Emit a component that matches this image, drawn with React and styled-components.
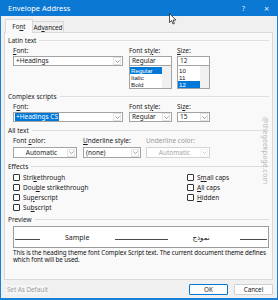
import React from "react";
import styled, { createGlobalStyle } from "styled-components";

const GlobalStyle = createGlobalStyle`
  html, body {
    margin: 0;
    padding: 0;
  }
  body {
    width: 278px;
    height: 300px;
    overflow: hidden;
    background: #f0f0f0;
    font-family: "Noto Sans", "DejaVu Sans", sans-serif;
    color: #1b1b1b;
  }
`;

function Chevron() {
  return (
    <svg width="5" height="3" viewBox="0 0 5 3">
      <path d="M0.4 0.4 L2.5 2.5 L4.6 0.4" fill="none" stroke="#606060" strokeWidth="0.6" />
    </svg>
  );
}

function Cursor() {
  return (
    <svg width="8" height="12" viewBox="0 0 8 12">
      <path
        d="M0.5 0.5 L0.5 9.5 L2.6 7.6 L4 11 L5.4 10.4 L4 7.1 L6.9 7.1 Z"
        fill="#fff"
        stroke="#222"
        strokeWidth="0.8"
        strokeLinejoin="round"
      />
    </svg>
  );
}

function App() {
  return (
    <Window>
      <GlobalStyle />
      <TitleBar>
        <Title>Envelope Address</Title>
        <TitleButton>?</TitleButton>
        <TitleButton $close>×</TitleButton>
      </TitleBar>

      <Body>
        <TabBar>
          <Tab $active>
            Fo<U>n</U>t
          </Tab>
          <Tab>
            Ad<U>v</U>anced
          </Tab>
        </TabBar>

        <Panel>
          <GroupHeader>Latin text</GroupHeader>
          <FieldRow $top={2}>
            <Field $w={110}>
              <FieldLabel>
                <U>F</U>ont:
              </FieldLabel>
              <Combo>
                <ComboText>+Headings</ComboText>
                <ArrowBox>
                  <Chevron />
                </ArrowBox>
              </Combo>
            </Field>
            <Field $w={43} $gap={6}>
              <FieldLabel>
                Font st<U>y</U>le:
              </FieldLabel>
              <Combo>
                <ComboText>Regular</ComboText>
              </Combo>
              <List>
                <Items>
                  <Item $selected>Regular</Item>
                  <Item>Italic</Item>
                  <Item>Bold</Item>
                </Items>
                <ScrollTrack />
              </List>
            </Field>
            <Field $w={33} $gap={5}>
              <FieldLabel>
                <U>S</U>ize:
              </FieldLabel>
              <Combo>
                <ComboText>12</ComboText>
              </Combo>
              <List>
                <Items>
                  <Item>10</Item>
                  <Item>11</Item>
                  <Item $selected>12</Item>
                </Items>
                <ScrollTrack />
              </List>
            </Field>
          </FieldRow>

          <GroupHeader $top={3}>Complex scripts</GroupHeader>
          <FieldRow $top={2}>
            <Field $w={110}>
              <FieldLabel>
                F<U>o</U>nt:
              </FieldLabel>
              <Combo>
                <ComboText>
                  <Selection>+Headings CS</Selection>
                </ComboText>
                <ArrowBox>
                  <Chevron />
                </ArrowBox>
              </Combo>
            </Field>
            <Field $w={43} $gap={6}>
              <FieldLabel>
                Font st<U>y</U>le:
              </FieldLabel>
              <Combo>
                <ComboText>Regular</ComboText>
                <ArrowBox>
                  <Chevron />
                </ArrowBox>
              </Combo>
            </Field>
            <Field $w={33} $gap={5}>
              <FieldLabel>
                Si<U>z</U>e:
              </FieldLabel>
              <Combo>
                <ComboText>15</ComboText>
                <ArrowBox>
                  <Chevron />
                </ArrowBox>
              </Combo>
            </Field>
          </FieldRow>

          <GroupHeader $top={4}>All text</GroupHeader>
          <FieldRow $top={2}>
            <Field $w={64}>
              <FieldLabel>
                Font <U>c</U>olor:
              </FieldLabel>
              <Combo $tall>
                <ComboText $center>Automatic</ComboText>
                <ArrowBox>
                  <Chevron />
                </ArrowBox>
              </Combo>
            </Field>
            <Field $w={58} $gap={6}>
              <FieldLabel>
                <U>U</U>nderline style:
              </FieldLabel>
              <Combo $tall>
                <ComboText>(none)</ComboText>
                <ArrowBox>
                  <Chevron />
                </ArrowBox>
              </Combo>
            </Field>
            <Field $w={64} $gap={5}>
              <FieldLabel $disabled>Underline color:</FieldLabel>
              <Combo $tall $disabled>
                <ComboText $center $disabled>
                  Automatic
                </ComboText>
                <ArrowBox $disabled>
                  <Chevron />
                </ArrowBox>
              </Combo>
            </Field>
          </FieldRow>

          <GroupHeader $top={4}>Effects</GroupHeader>
          <Effects>
            <CheckColumn $w={174}>
              <CheckRow>
                <Box />
                Stri<U>k</U>ethrough
              </CheckRow>
              <CheckRow>
                <Box />
                Dou<U>b</U>le strikethrough
              </CheckRow>
              <CheckRow>
                <Box />
                Su<U>p</U>erscript
              </CheckRow>
              <CheckRow>
                <Box />
                Su<U>b</U>script
              </CheckRow>
            </CheckColumn>
            <CheckColumn>
              <CheckRow>
                <Box />
                S<U>m</U>all caps
              </CheckRow>
              <CheckRow>
                <Box />
                <U>A</U>ll caps
              </CheckRow>
              <CheckRow>
                <Box />
                <U>H</U>idden
              </CheckRow>
            </CheckColumn>
          </Effects>

          <GroupHeader $top={3}>Preview</GroupHeader>
          <PreviewBox>
            <Rule $w={25} $left={1} />
            <SampleText $left={25}>Sample</SampleText>
            <Rule $w={53} $left={26} />
            <SampleText $left={24} lang="ar">
              نموذج
            </SampleText>
            <Rule $w={27} $left={30} />
          </PreviewBox>
          <Description>
            This is the heading theme font Complex Script text. The current document theme defines
            which font will be used.
          </Description>
        </Panel>

        <Footer>
          <Button $w={45} $disabled>
            Set As Default
          </Button>
          <Spacer />
          <Button $w={39} $default>
            OK
          </Button>
          <Button $w={39} $left={6}>
            Cancel
          </Button>
        </Footer>
      </Body>

      <Watermark>@thegeekpage.com</Watermark>
      <CursorSpot>
        <Cursor />
      </CursorSpot>
    </Window>
  );
}

const Window = styled.div`
  position: relative;
  width: 278px;
  height: 300px;
  box-sizing: border-box;
  border: 1px solid #1a7fd6;
  border-top: none;
  border-bottom-width: 2px;
  display: flex;
  flex-direction: column;
  background: #f0f0f0;
  font-size: 6.5px;
`;

const TitleBar = styled.div`
  height: 16px;
  margin: 0 -1px;
  background: #0b78d4;
  color: #ffffff;
  display: flex;
  align-items: center;
  padding-left: 8px;
`;

const Title = styled.div`
  flex: 1;
  font-size: 7.4px;
  letter-spacing: 0.05px;
`;

const TitleButton = styled.div`
  width: 23px;
  text-align: center;
  font-size: ${(p) => (p.$close ? "9px" : "7px")};
  color: #dcebf9;
`;

const Body = styled.div`
  flex: 1;
  display: flex;
  flex-direction: column;
  padding: 3px 4px 0 3px;
`;

const TabBar = styled.div`
  display: flex;
  align-items: flex-end;
  height: 13px;
  padding-left: 1px;
`;

const Tab = styled.div`
  position: relative;
  z-index: 1;
  box-sizing: border-box;
  width: ${(p) => (p.$active ? "28px" : "32px")};
  height: ${(p) => (p.$active ? "14px" : "11px")};
  margin-bottom: ${(p) => (p.$active ? "-1px" : "0")};
  margin-left: ${(p) => (p.$active ? "0" : "-1px")};
  background: ${(p) => (p.$active ? "#f9f9f9" : "#f0f0f0")};
  border: 1px solid #d9d9d9;
  border-bottom: none;
  display: flex;
  align-items: center;
  justify-content: center;
  padding-bottom: ${(p) => (p.$active ? "1px" : "0")};
  font-size: 6.3px;
`;

const U = styled.span`
  text-decoration: underline;
  text-decoration-thickness: 0.5px;
  text-underline-offset: 1px;
`;

const Panel = styled.div`
  box-sizing: border-box;
  height: 248px;
  border: 1px solid #d9d9d9;
  background: #f9f9f9;
  padding: 3px 0 0 3px;
  display: flex;
  flex-direction: column;
`;

const GroupHeader = styled.div`
  display: flex;
  align-items: center;
  height: 9px;
  margin-top: ${(p) => p.$top || 0}px;
  color: #1b1b1b;

  &::after {
    content: "";
    flex: 1;
    height: 1px;
    margin: 0 3px 0 3px;
    background: #dedede;
  }
`;

const FieldRow = styled.div`
  display: flex;
  margin-top: ${(p) => p.$top || 0}px;
  padding-left: 5px;
`;

const Field = styled.div`
  width: ${(p) => p.$w}px;
  margin-left: ${(p) => p.$gap || 0}px;
  display: flex;
  flex-direction: column;
`;

const FieldLabel = styled.div`
  height: 8px;
  line-height: 8px;
  margin-bottom: 1px;
  white-space: nowrap;
  color: ${(p) => (p.$disabled ? "#9a9a9a" : "#1b1b1b")};
`;

const Combo = styled.div`
  box-sizing: border-box;
  height: ${(p) => (p.$tall ? "11px" : "10px")};
  margin-top: ${(p) => (p.$tall ? "1px" : "0")};
  border: 1px solid ${(p) => (p.$disabled ? "#d4d4d4" : "#a3a3a3")};
  background: #ffffff;
  display: flex;
  align-items: center;
`;

const ComboText = styled.div`
  flex: 1;
  padding-left: 2px;
  white-space: nowrap;
  overflow: hidden;
  line-height: 8px;
  text-align: ${(p) => (p.$center ? "center" : "left")};
  color: ${(p) => (p.$disabled ? "#a6a6a6" : "#1b1b1b")};
`;

const Selection = styled.span`
  background: #0078d7;
  color: #ffffff;
  padding: 0 1px;
  margin-left: -1px;
`;

const ArrowBox = styled.div`
  box-sizing: border-box;
  width: 8px;
  height: 8px;
  margin-right: 1px;
  border: 1px solid ${(p) => (p.$disabled ? "#ececec" : "#e3e3e3")};
  display: flex;
  align-items: center;
  justify-content: center;
  opacity: ${(p) => (p.$disabled ? 0.5 : 1)};
`;

const List = styled.div`
  box-sizing: border-box;
  height: 24px;
  margin-top: -1px;
  border: 1px solid #a3a3a3;
  background: #ffffff;
  display: flex;
`;

const Items = styled.div`
  flex: 1;
  display: flex;
  flex-direction: column;
  padding-top: 1px;
`;

const Item = styled.div`
  height: 7px;
  line-height: 7px;
  padding-left: 1px;
  font-family: "Liberation Sans", Arial, sans-serif;
  font-size: 6.2px;
  background: ${(p) => (p.$selected ? "#0078d7" : "transparent")};
  color: ${(p) => (p.$selected ? "#ffffff" : "#1b1b1b")};
`;

const ScrollTrack = styled.div`
  width: 9px;
  background: #f0f0f0;
`;

const Effects = styled.div`
  display: flex;
  margin-top: 1px;
  padding-left: 5px;
`;

const CheckColumn = styled.div`
  display: flex;
  flex-direction: column;
  width: ${(p) => (p.$w ? `${p.$w}px` : "auto")};
  flex-shrink: 0;
`;

const CheckRow = styled.div`
  display: flex;
  align-items: center;
  height: 10px;
  white-space: nowrap;
`;

const Box = styled.div`
  box-sizing: border-box;
  width: 7px;
  height: 7px;
  margin-right: 3px;
  border: 1px solid #333333;
  border-radius: 1px;
  background: #ffffff;
`;

const PreviewBox = styled.div`
  box-sizing: border-box;
  width: 256px;
  height: 22px;
  margin: 2px 0 0 5px;
  border: 1px solid #9c9c9c;
  background: #ffffff;
  display: flex;
  align-items: center;
`;

const Rule = styled.div`
  width: ${(p) => p.$w}px;
  height: 1px;
  margin-left: ${(p) => p.$left}px;
  margin-top: 5px;
  background: #4a4a4a;
`;

const SampleText = styled.div`
  margin-left: ${(p) => p.$left}px;
  font-size: 7px;
  color: #222222;
`;

const Description = styled.div`
  margin: 1px 0 0 5px;
  line-height: 7.4px;
  font-size: 6.2px;
  letter-spacing: -0.06px;
  color: #111111;
`;

const Footer = styled.div`
  display: flex;
  align-items: flex-start;
  padding-top: 4px;
`;

const Spacer = styled.div`
  flex: 1;
`;

const Button = styled.div`
  box-sizing: border-box;
  width: ${(p) => p.$w}px;
  height: 11px;
  margin-left: ${(p) => p.$left || (p.$disabled ? 1 : 0)}px;
  border: 1px solid
    ${(p) => (p.$default ? "#0078d7" : p.$disabled ? "#f0f0f0" : "#d0d0d0")};
  border-radius: 1px;
  background: ${(p) => (p.$disabled ? "#f5f5f5" : "#fdfdfd")};
  color: ${(p) => (p.$disabled ? "#a0a0a0" : "#1b1b1b")};
  display: flex;
  align-items: center;
  justify-content: center;
  font-size: 6.3px;
`;

const Watermark = styled.div`
  position: absolute;
  left: 260px;
  top: 117px;
  writing-mode: vertical-rl;
  font-size: 7px;
  color: #b9b9b9;
  letter-spacing: 0.1px;
`;

const CursorSpot = styled.div`
  position: absolute;
  left: 168px;
  top: 13px;
  line-height: 0;
`;

export default App;
